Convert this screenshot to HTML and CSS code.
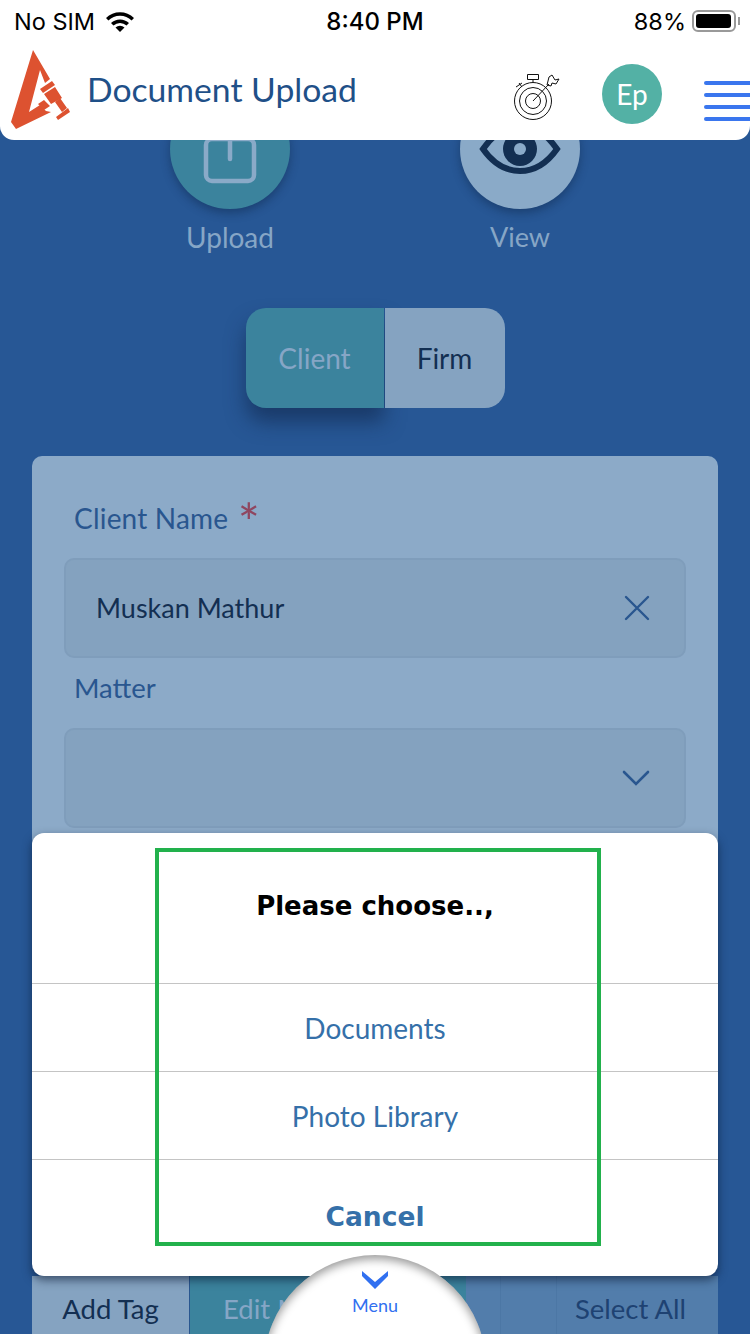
FILE: index.html
```html
<!DOCTYPE html>
<html lang="en">
<head>
	<meta charset="UTF-8" />
	<meta name="viewport" content="width=device-width, initial-scale=1.0" />
	<title>Document Upload</title>
	<link rel="stylesheet" href="styles.css">
</head>
<body>
	<div class="screen">
		<!-- page behind the dialog -->
		<div class="content">
			<div class="actions">
				<div class="action">
					<div class="circle circle-teal">
						<svg width="120" height="120" viewBox="0 0 120 120" fill="none" stroke="#8aaac8" stroke-width="4.500"><rect x="36" y="50" width="48" height="42" rx="6"/><path d="M60 46v24" stroke-linecap="round"/></svg>
					</div>
					<span class="action-label">Upload</span>
				</div>
				<div class="action">
					<div class="circle circle-light">
						<svg width="120" height="120" viewBox="0 0 120 120"><path d="M23 60C35 43 48 36 60 36s25 7 37 24C85 77 72 82 60 82S35 77 23 60z" fill="none" stroke="#132f52" stroke-width="6"/><circle cx="60" cy="60" r="17" fill="#132f52"/><circle cx="60" cy="60" r="6" fill="#8aaac8"/></svg>
					</div>
					<span class="action-label action-label-view">View</span>
				</div>
			</div>

			<div class="toggle">
				<div class="toggle-item toggle-on">Client</div>
				<div class="toggle-item toggle-off">Firm</div>
			</div>

			<div class="card">
				<div class="field-label">Client Name <span class="star">*</span></div>
				<div class="field">
					<span class="field-value">Muskan Mathur</span>
					<svg width="26" height="26" viewBox="0 0 26 26"><path d="M2 2l22 22M24 2L2 24" stroke="#29568f" stroke-width="2.400" stroke-linecap="round"/></svg>
				</div>
				<div class="field-label matter">Matter</div>
				<div class="field">
					<span></span>
					<svg width="28" height="16" viewBox="0 0 28 16"><path d="M2 2l12 12L26 2" fill="none" stroke="#29568f" stroke-width="2.600" stroke-linecap="round"/></svg>
				</div>
			</div>
		</div>

		<div class="bottom-tabs">
			<div class="tab tab-light">Add Tag</div>
			<div class="tab tab-teal">Edit M</div>
			<div class="tab tab-blank"></div>
			<div class="tab tab-blank tab-wide"></div>
			<div class="tab tab-select">Select All</div>
		</div>

		<!-- top bar -->
		<div class="topbar">
			<div class="status">
				<div class="status-left">
					<span>No SIM</span>
					<svg width="30" height="22" viewBox="0 0 30 22"><path d="M1 8a20 20 0 0 1 28 0l-2.400 2.600a16.500 16.500 0 0 0-23.200 0z"/><path d="M6 13a13 13 0 0 1 18 0l-2.500 2.600a9.500 9.500 0 0 0-13 0z"/><path d="M10.500 17.500a6.500 6.500 0 0 1 9 0L15 22z"/></svg>
				</div>
				<span class="status-time">8:40 PM</span>
				<div class="status-right">
					<span>88%</span>
					<div class="battery"><div class="battery-fill"></div></div>
					<div class="battery-tip"></div>
				</div>
			</div>
			<div class="header">
				<svg class="logo" width="70" height="90" viewBox="0 45 70 90" fill="#dd5230">
					<path d="M33 50L50 79 45 83 40 70 29 112 40 105 46 111 51 112 16 129 11 122z"/>
					<path d="M40 89L52 81 55 85 43 93zM44 94L55 87 62 98 51 104z"/>
					<path d="M55 102L60 98 67 108 62 112zM56 117L68 108 70 112 58 120zM38 104L44 100 50 106 44 110z"/>
				</svg>
				<h1 class="title">Document Upload</h1>
				<svg class="target" width="48" height="48" viewBox="513 72 48 48" fill="none" stroke="#111" stroke-width="1">
					<circle cx="533" cy="101" r="18.500"/>
					<circle cx="533" cy="101" r="13.500"/>
					<circle cx="533" cy="101" r="7.500"/>
					<path d="M527.500 74.500h11v5h-11zM533 79.500v3M516 87l6-4M519 83l3 4"/>
					<path d="M533 101L549 84M547 85l2-8 3-2 3 5 4-1-3 5-4-1-1 3-4-1"/>
				</svg>
				<div class="avatar">Ep</div>
				<div class="burger"><i></i><i></i><i></i><i></i></div>
			</div>
		</div>

		<!-- dialog -->
		<div class="dialog">
			<div class="dialog-title">Please choose..,</div>
			<div class="dialog-row">Documents</div>
			<div class="dialog-row">Photo Library</div>
			<div class="dialog-row dialog-cancel">Cancel</div>
		</div>
		<div class="highlight"></div>

		<div class="menu">
			<svg width="26" height="18" viewBox="0 0 26 18"><path d="M0 0l13 11L26 0v5L13 18 0 5z" fill="#3170f0"/></svg>
			<span>Menu</span>
		</div>
	</div>
</body>
</html>
```

FILE: styles.css
```css
html,
body {
	margin: 0;
	padding: 0;
}

.screen {
	position: relative;
	width: 750px;
	height: 1334px;
	overflow: hidden;
	background-color: #275795;
	font-family: "Lato", "Open Sans", sans-serif;
}

/* Page behind the dialog */
.content {
	display: flex;
	flex-direction: column;
	align-items: center;
	padding-top: 89px;
}

.actions {
	display: flex;
	gap: 170px;
}

.action {
	display: flex;
	flex-direction: column;
	align-items: center;
	gap: 11px;
}

.circle {
	width: 120px;
	height: 120px;
	border-radius: 50%;
	display: flex;
	align-items: center;
	justify-content: center;
	box-shadow: 0 4px 10px rgba(10, 30, 60, 0.4);
}

.circle-teal {
	background-color: #3b839d;
}

.circle-light {
	background-color: #8aaac8;
}

.action-label {
	font-size: 28px;
	line-height: 34px;
	color: #86a6c6;
}

.action-label-view {
	font-size: 27px;
}

.toggle {
	display: flex;
	margin-top: 54px;
	height: 100px;
	border-radius: 20px;
}

.toggle-item {
	display: flex;
	align-items: center;
	justify-content: center;
	font-size: 28px;
}

.toggle-on {
	width: 138px;
	background-color: #3b839d;
	color: #86a6c6;
	border-radius: 20px 0 0 20px;
	box-shadow: 0 14px 20px rgba(15, 35, 70, 0.55);
}

.toggle-off {
	width: 120px;
	margin-left: 1px;
	background-color: #85a3c1;
	color: #132f52;
	border-radius: 0 20px 20px 0;
}

.card {
	box-sizing: border-box;
	width: 686px;
	height: 700px;
	margin-top: 48px;
	padding: 42px 32px 0;
	background-color: #8caac8;
	border-radius: 10px;
}

.field-label {
	height: 60px;
	padding-left: 10px;
	font-size: 28px;
	letter-spacing: 0.2px;
	line-height: 40px;
	color: #29568f;
}

.matter {
	height: 40px;
	margin-top: 10px;
	margin-bottom: 20px;
	letter-spacing: 0;
	font-size: 27.500px;
}

.star {
	margin-left: 2px;
	color: #8f4660;
	font-size: 52px;
	line-height: 0;
	vertical-align: -13px;
}

.field {
	box-sizing: border-box;
	display: flex;
	align-items: center;
	justify-content: space-between;
	height: 100px;
	padding: 0 34px 0 30px;
	background-color: #84a2bf;
	border: 2px solid #7f9dbb;
	border-radius: 10px;
	font-size: 27px;
	color: #132f52;
}

.field-value {
	padding-bottom: 2px;
}

/* Tab strip at the bottom */
.bottom-tabs {
	position: absolute;
	left: 32px;
	top: 1276px;
	width: 686px;
	height: 58px;
	display: flex;
	font-size: 27.500px;
}

.tab {
	box-sizing: border-box;
	display: flex;
	align-items: center;
	justify-content: center;
	height: 100%;
	padding-top: 6px;
	white-space: nowrap;
}

.tab-light {
	width: 158px;
	background-color: #85a3c1;
	color: #132f52;
	border-right: 1px solid #29568f;
}

.tab-teal {
	width: 276px;
	background-color: #3b839d;
	color: #86a6c6;
	justify-content: flex-start;
	padding-left: 33px;
}

.tab-blank {
	width: 35px;
	background-color: #527dab;
	border-right: 1px solid #4c77a5;
}

.tab-wide {
	width: 56px;
}

.tab-select {
	flex: 1;
	padding-right: 14px;
	background-color: #527dab;
	color: #1e4272;
}

/* Top bar */
.topbar {
	position: absolute;
	left: 0;
	top: 0;
	width: 750px;
	height: 140px;
	background-color: #fff;
	border-radius: 0 0 14px 14px;
}

.status {
	display: flex;
	align-items: center;
	justify-content: space-between;
	height: 42px;
	padding: 0 10px 0 14px;
	font-family: "Inter", "Liberation Sans", sans-serif;
	font-size: 23.500px;
	color: #000;
}

.status-left {
	display: flex;
	align-items: center;
	gap: 10px;
	width: 200px;
}

.status-time {
	margin-right: 4px;
	font-size: 24px;
	font-weight: 500;
}

.status-right {
	display: flex;
	align-items: center;
	justify-content: flex-end;
	width: 200px;
}

.battery {
	box-sizing: border-box;
	width: 44px;
	height: 22px;
	margin-left: 6px;
	padding: 2px;
	border: 2px solid #999;
	border-radius: 6px;
}

.battery-fill {
	width: 35px;
	height: 14px;
	background-color: #000;
	border-radius: 3px;
}

.battery-tip {
	width: 2px;
	height: 8px;
	margin-left: 2px;
	background-color: #999;
}

.header {
	display: flex;
	align-items: center;
	height: 98px;
}

.logo {
	flex: none;
	margin-top: -2px;
}

.title {
	flex: none;
	width: 426px;
	margin: -4px 0 0 17px;
	font-size: 33.700px;
	font-weight: 400;
	white-space: nowrap;
	color: #1f5088;
}

.target {
	flex: none;
	margin-top: 10px;
}

.avatar {
	flex: none;
	display: flex;
	align-items: center;
	justify-content: center;
	width: 60px;
	height: 60px;
	margin-left: 41px;
	margin-top: 6px;
	border-radius: 50%;
	background-color: #53b1a5;
	color: #fff;
	font-size: 28px;
}

.burger {
	flex: none;
	display: flex;
	flex-direction: column;
	gap: 8px;
	width: 46px;
	margin-left: 42px;
	margin-top: 20px;
}

.burger i {
	display: block;
	height: 4px;
	background-color: #3a76ee;
	border-radius: 2px 0 0 2px;
}

/* Action sheet */
.dialog {
	position: absolute;
	left: 32px;
	top: 833px;
	width: 686px;
	height: 443px;
	background-color: #fff;
	border-radius: 12px;
	box-shadow: 0 4px 10px rgba(10, 25, 50, 0.6);
}

.dialog-title {
	height: 150px;
	line-height: 146px;
	text-align: center;
	font-family: "DejaVu Sans", sans-serif;
	font-size: 26px;
	font-weight: 700;
	color: #000;
}

.dialog-row {
	height: 87px;
	line-height: 88px;
	border-top: 1px solid #c4c4c4;
	text-align: center;
	font-size: 28px;
	color: #3570a9;
}

.dialog-cancel {
	height: 116px;
	line-height: 114px;
	font-family: "DejaVu Sans", sans-serif;
	font-size: 26.500px;
	font-weight: 700;
}

.highlight {
	position: absolute;
	left: 155px;
	top: 848px;
	width: 446px;
	height: 398px;
	box-sizing: border-box;
	border: 4px solid #22b14c;
}

.menu {
	position: absolute;
	left: 264px;
	top: 1255px;
	width: 222px;
	height: 222px;
	border-radius: 50%;
	background-color: #fff;
	box-shadow: inset 0 4px 10px rgba(0, 0, 0, 0.4);
	display: flex;
	flex-direction: column;
	align-items: center;
	padding-top: 16px;
	box-sizing: border-box;
	font-size: 18px;
	color: #3170f0;
}

.menu span {
	margin-top: 5px;
}
```
